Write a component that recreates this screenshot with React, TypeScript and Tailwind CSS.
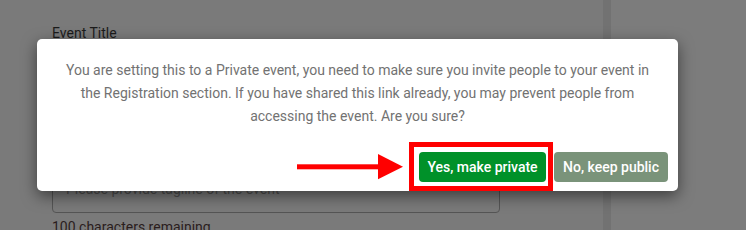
import React from "react";

export default function App() {
  return (
    <div
      className="relative w-[746px] h-[230px] overflow-hidden bg-[#7a7a7a]"
      style={{ fontFamily: "Roboto, 'Liberation Sans', sans-serif" }}
    >
      {/* underlying page (already dimmed by overlay) */}
      <div className="flex h-full w-full">
        <div className="w-[603px] h-full bg-[#7a7a7a] pl-[52px] pt-[25px]">
          <div className="text-[14px] leading-[17px] text-[#1c1c1c]">Event Title</div>
          <div className="mt-[8px] h-[40px] w-[448px] rounded-[4px] border border-[#5a5a5a]" />
          <div className="mt-[40px] h-[17px] text-[14px] leading-[17px] text-[#1c1c1c]">Tagline</div>
          <div className="mt-[25px] h-[41px] w-[448px] rounded-[4px] border border-[#555555] pl-[13px] pt-[6px] text-[14px] leading-[20px] text-[#4e4e4e]">
            Please provide tagline of the event
          </div>
          <div className="mt-[4px] text-[14px] leading-[20px] text-[#2a1d1d]">100 characters remaining</div>
        </div>
        <div className="w-[8px] h-full bg-[#727272]" />
        <div className="flex-1 h-full bg-[#7c7c7c]" />
      </div>

      {/* modal */}
      <div className="absolute left-[37px] top-[39px] w-[641px] h-[152px] bg-white rounded-[5px] shadow-[0_5px_15px_rgba(0,0,0,0.5)] flex flex-col">
        <p className="px-[25px] pt-[20px] text-center text-[14px] leading-[23px] text-[#727272]">
          You are setting this to a Private event, you need to make sure you invite people to your event in the
          Registration section. If you have shared this link already, you may prevent people from accessing the
          event. Are you sure?
        </p>
        <div className="mt-auto mb-[9px] mr-[10px] flex justify-end gap-[8px]">
          <button className="h-[30px] w-[127px] rounded-[4px] bg-[#009129] text-[14px] font-medium text-white">
            Yes, make private
          </button>
          <button className="h-[30px] w-[114px] rounded-[4px] bg-[#7a937a] text-[14px] font-medium text-white">
            No, keep public
          </button>
        </div>
      </div>

      {/* annotation: red box */}
      <div className="absolute left-[409px] top-[142px] w-[144px] h-[49px] border-[5px] border-[#ff0000]" />

      {/* annotation: arrow */}
      <svg className="absolute left-0 top-0" width="746" height="230" viewBox="0 0 746 230">
        <rect x="297" y="164.3" width="83" height="5" fill="#ff0000" />
        <polygon points="378,154 403,166.7 378,179.3" fill="#ff0000" />
      </svg>
    </div>
  );
}
